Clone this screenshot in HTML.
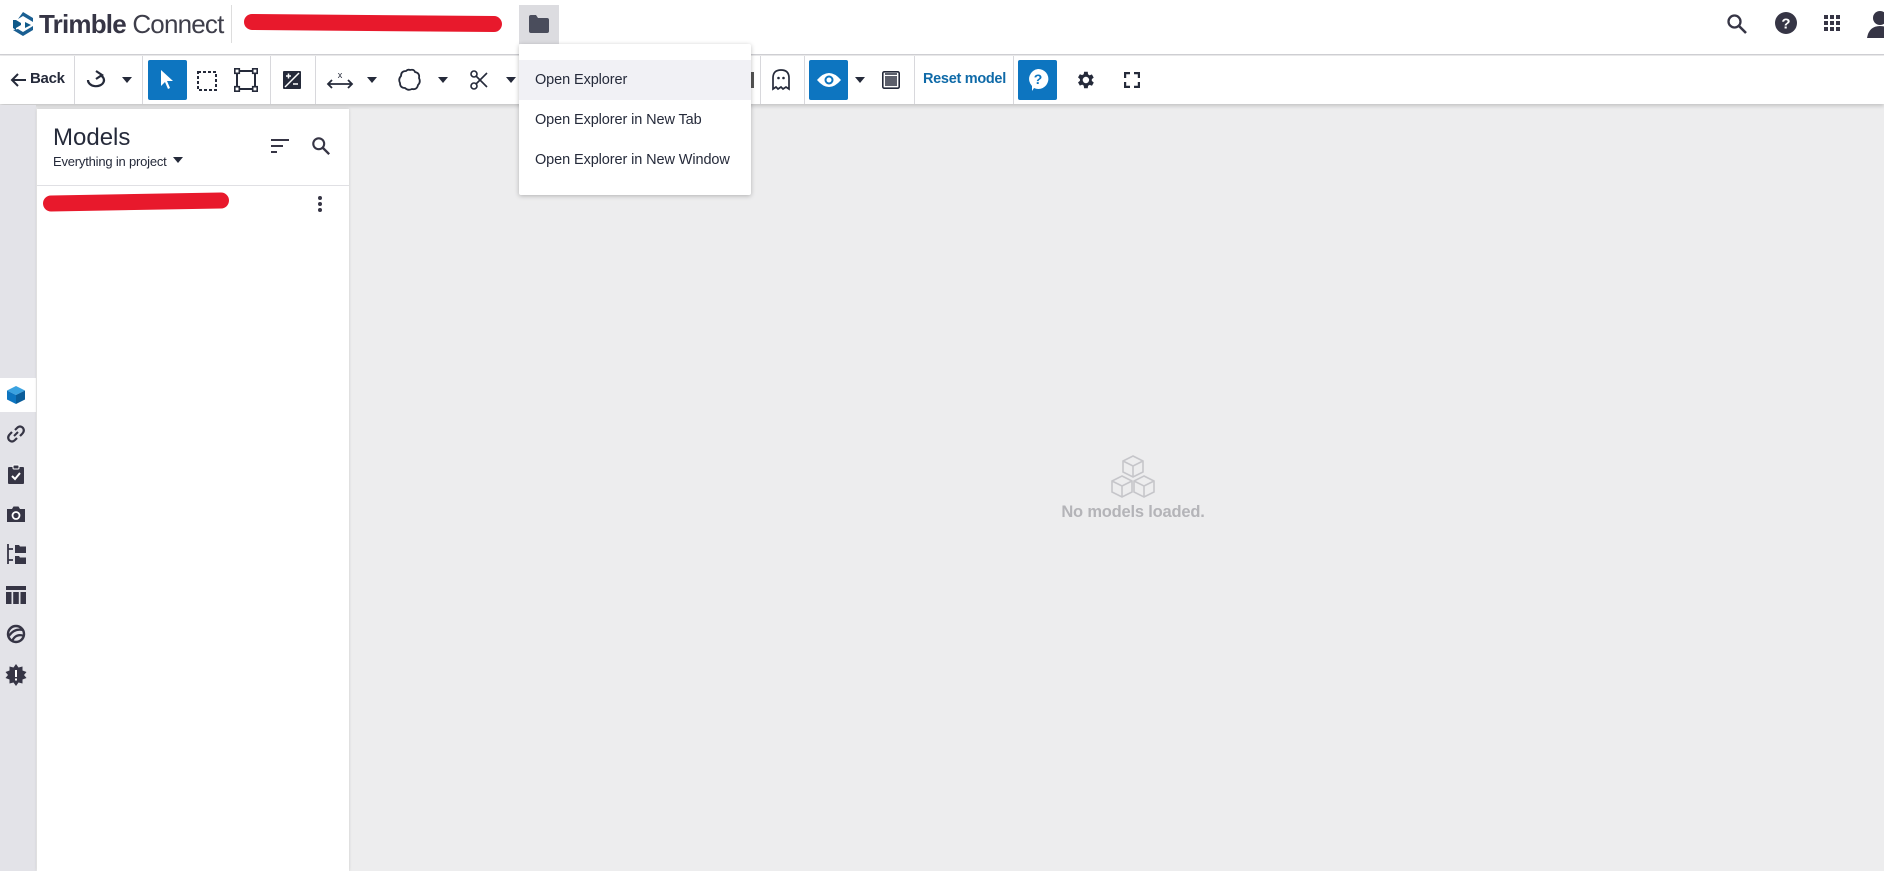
<!DOCTYPE html>
<html><head><meta charset="utf-8"><style>
*{box-sizing:border-box;margin:0;padding:0}
body{width:1884px;height:871px;overflow:hidden;background:#ededee;font-family:"Liberation Sans",sans-serif;color:#252a3a;position:relative}
.a{position:absolute}
svg{display:block}
.sep{position:absolute;top:56px;width:1px;height:48px;background:#d8d8dc}
.item{position:absolute;left:519px;width:232px;height:40px;font-size:14.5px;padding-left:16px;line-height:40px;color:#252a3a;letter-spacing:-0.1px}
</style></head><body>
<!-- header -->
<div class="a" style="left:0;top:0;width:1884px;height:55px;background:#fff;border-bottom:1px solid #cfcfd4"></div>
<svg class="a" style="left:12px;top:11px" width="22" height="26" viewBox="0 0 22 26"><path d="M11 1 L21 7 L21 11 L16 8 L11 5 L6 8 Z" fill="#1a5f92"/><path d="M4 9 L9 12 L9 14 L4 17 L4 19 L1 17 L1 9 Z" fill="#0f5a8a"/><path d="M6 18 L11 21 L16 18 L21 15 L21 19 L11 25 L1 19 Z" fill="#1a5f92"/><path d="M13 11 L19 14 L13 17 Z" fill="#0f5a8a"/></svg>
<div class="a" style="left:39px;top:9px;font-size:26px;color:#363545;letter-spacing:-0.8px;white-space:nowrap"><span style="font-weight:bold">Trimble</span> <span style="color:#3e3e4a">Connect</span></div>
<div class="a" style="left:231px;top:5px;width:1px;height:38px;background:#ddd"></div>
<div class="a" style="left:244px;top:15px;width:258px;height:16px;background:#e8192c;border-radius:9px;transform:rotate(0.5deg)"></div>
<div class="a" style="left:519px;top:5px;width:40px;height:39px;background:#dcdce0"></div>
<svg class="a" style="left:528px;top:14px" width="22" height="20" viewBox="0 0 22 20"><path d="M1 3 Q1 1 3 1 L8 1 L10 4 L19 4 Q21 4 21 6 L21 17 Q21 19 19 19 L3 19 Q1 19 1 17 Z" fill="#4a4d5c"/></svg>
<svg class="a" style="left:1726px;top:13px" width="22" height="22" viewBox="0 0 22 22"><circle cx="8.5" cy="8.5" r="6" fill="none" stroke="#363545" stroke-width="2.3"/><path d="M13 13 L20 20" stroke="#363545" stroke-width="2.6"/></svg>
<svg class="a" style="left:1774px;top:11px" width="24" height="24" viewBox="0 0 24 24"><circle cx="12" cy="12" r="11" fill="#363545"/><text x="12" y="17.5" text-anchor="middle" font-size="15" font-weight="bold" fill="#fff" font-family="Liberation Sans">?</text></svg>
<svg class="a" style="left:1824px;top:15px" width="16" height="16" viewBox="0 0 16 16" fill="#363545"><rect x="0" y="0" width="4" height="4"/><rect x="6" y="0" width="4" height="4"/><rect x="12" y="0" width="4" height="4"/><rect x="0" y="6" width="4" height="4"/><rect x="6" y="6" width="4" height="4"/><rect x="12" y="6" width="4" height="4"/><rect x="0" y="12" width="4" height="4"/><rect x="6" y="12" width="4" height="4"/><rect x="12" y="12" width="4" height="4"/></svg>
<svg class="a" style="left:1867px;top:10px" width="20" height="28" viewBox="0 0 20 28"><circle cx="13" cy="8" r="7" fill="#363545"/><path d="M0 28 Q2 16 13 16 Q20 16 20 20 L20 28 Z" fill="#363545"/></svg>
<!-- toolbar -->
<div class="a" style="left:0;top:56px;width:1884px;height:48px;background:#fff;box-shadow:0 2px 4px rgba(0,0,0,.18)"></div>
<svg class="a" style="left:10px;top:71px" width="18" height="18" viewBox="0 0 18 18"><path d="M16 9 L2 9 M8 3 L2 9 L8 15" fill="none" stroke="#252a3a" stroke-width="2"/></svg>
<div class="a" style="left:30px;top:70px;font-size:15px;font-weight:bold;color:#252a3a;letter-spacing:-0.3px">Back</div>
<div class="sep" style="left:74px"></div>
<svg class="a" style="left:84px;top:69px" width="24" height="22" viewBox="0 0 24 22"><path d="M4 11 A8 6 0 1 0 16 6" fill="none" stroke="#252a3a" stroke-width="2.2"/><path d="M12 2 L18 6 L12 10" fill="none" stroke="#252a3a" stroke-width="2.2"/></svg>
<svg class="a" style="left:122px;top:77px" width="10" height="6"><path d="M0 0 L10 0 L5 6Z" fill="#252a3a"/></svg>
<div class="sep" style="left:142px"></div>
<div class="a" style="left:148px;top:60px;width:39px;height:40px;background:#0d75c0;border-radius:2px"></div>
<svg class="a" style="left:159px;top:69px" width="16" height="22" viewBox="0 0 16 22"><path d="M2 1 L2 17 L6 13 L9 20 L11 19 L8 12 L14 12 Z" fill="#fff"/></svg>
<svg class="a" style="left:197px;top:71px" width="20" height="20" viewBox="0 0 20 20"><rect x="1" y="1" width="18" height="18" fill="none" stroke="#252a3a" stroke-width="2" stroke-dasharray="3 2"/></svg>
<svg class="a" style="left:234px;top:68px" width="24" height="24" viewBox="0 0 24 24"><rect x="3" y="3" width="18" height="18" fill="none" stroke="#252a3a" stroke-width="2"/><g fill="#fff" stroke="#252a3a" stroke-width="1.6"><rect x="0.8" y="0.8" width="4.5" height="4.5"/><rect x="18.7" y="0.8" width="4.5" height="4.5"/><rect x="0.8" y="18.7" width="4.5" height="4.5"/><rect x="18.7" y="18.7" width="4.5" height="4.5"/></g></svg>
<div class="sep" style="left:270px"></div>
<svg class="a" style="left:282px;top:70px" width="20" height="20" viewBox="0 0 20 20"><rect x="1" y="1" width="18" height="18" rx="1" fill="#252a3a"/><path d="M17 3 L3 17" stroke="#fff" stroke-width="1.5"/><path d="M4 6 H9 M6.5 3.5 V8.5" stroke="#fff" stroke-width="1.5"/><path d="M11 14 H16" stroke="#fff" stroke-width="1.5"/></svg>
<div class="sep" style="left:315px"></div>
<svg class="a" style="left:326px;top:69px" width="28" height="22" viewBox="0 0 28 22"><text x="14" y="9" text-anchor="middle" font-size="9" fill="#252a3a" font-family="Liberation Sans">x</text><path d="M2 15 H26 M6 11 L2 15 L6 19 M22 11 L26 15 L22 19" fill="none" stroke="#252a3a" stroke-width="1.8"/></svg>
<svg class="a" style="left:367px;top:77px" width="10" height="6"><path d="M0 0 L10 0 L5 6Z" fill="#252a3a"/></svg>
<svg class="a" style="left:398px;top:68px" width="24" height="24" viewBox="0 0 24 24"><path d="M12 2 Q16 1 17 4 Q22 5 21 10 Q23 14 20 17 Q19 22 14 21 Q10 23 7 20 Q2 20 2 15 Q0 11 3 8 Q3 3 8 3 Q10 1 12 2Z" fill="none" stroke="#252a3a" stroke-width="1.8"/></svg>
<svg class="a" style="left:438px;top:77px" width="10" height="6"><path d="M0 0 L10 0 L5 6Z" fill="#252a3a"/></svg>
<svg class="a" style="left:470px;top:70px" width="18" height="20" viewBox="0 0 18 20"><circle cx="4" cy="4" r="3" fill="none" stroke="#252a3a" stroke-width="1.6"/><circle cx="4" cy="16" r="3" fill="none" stroke="#252a3a" stroke-width="1.6"/><path d="M6 6 L17 17 M6 14 L17 3" stroke="#252a3a" stroke-width="1.6"/></svg>
<svg class="a" style="left:506px;top:77px" width="10" height="6"><path d="M0 0 L10 0 L5 6Z" fill="#252a3a"/></svg>
<div class="a" style="left:751px;top:72px;width:3px;height:16px;background:#555"></div>
<div class="sep" style="left:760px"></div>
<svg class="a" style="left:770px;top:68px" width="22" height="24" viewBox="0 0 22 24"><path d="M3 21 L3 10 Q3 2 11 2 Q19 2 19 10 L19 21 L16 19 L13 21 L11 19 L8 21 L6 19 Z" fill="none" stroke="#252a3a" stroke-width="1.7"/><circle cx="8.5" cy="10" r="1.3" fill="#252a3a"/><circle cx="13.5" cy="10" r="1.3" fill="#252a3a"/></svg>
<div class="sep" style="left:804px"></div>
<div class="a" style="left:809px;top:60px;width:39px;height:40px;background:#0d75c0;border-radius:2px"></div>
<svg class="a" style="left:816px;top:72px" width="26" height="16" viewBox="0 0 26 16"><path d="M1 8 Q13 -6 25 8 Q13 22 1 8Z" fill="#fff"/><circle cx="13" cy="8" r="4.5" fill="#0d75c0"/><circle cx="13" cy="8" r="2.5" fill="#fff"/></svg>
<svg class="a" style="left:855px;top:77px" width="10" height="6"><path d="M0 0 L10 0 L5 6Z" fill="#252a3a"/></svg>
<svg class="a" style="left:882px;top:71px" width="18" height="18" viewBox="0 0 18 18"><rect x="0.8" y="0.8" width="16.4" height="16.4" rx="1.5" fill="#fff" stroke="#252a3a" stroke-width="1.6"/><rect x="3" y="5" width="12" height="10" fill="#252a3a" opacity=".75"/><path d="M3 3 H15" stroke="#252a3a" stroke-width="1.5"/></svg>
<div class="sep" style="left:914px"></div>
<div class="a" style="left:923px;top:71px;font-size:14.5px;font-weight:bold;color:#0f6aa8;letter-spacing:-0.3px">Reset model</div>
<div class="sep" style="left:1013px"></div>
<div class="a" style="left:1018px;top:60px;width:39px;height:40px;background:#0d75c0;border-radius:2px"></div>
<svg class="a" style="left:1027px;top:68px" width="22" height="24" viewBox="0 0 22 24"><path d="M11 1 A10 10 0 1 1 7 20 L5 23 L5 18 A10 10 0 0 1 11 1Z" fill="#fff"/><text x="11" y="16" text-anchor="middle" font-size="14" font-weight="bold" fill="#0d75c0" font-family="Liberation Sans">?</text></svg>
<svg class="a" style="left:1074px;top:69px" width="22" height="22" viewBox="0 0 24 24"><path fill="#252a3a" d="M19.4 13a7.5 7.5 0 0 0 0-2l2.1-1.6-2-3.5-2.5 1a7.6 7.6 0 0 0-1.7-1L15 3h-4l-.4 2.7a7.6 7.6 0 0 0-1.7 1l-2.5-1-2 3.5L6.5 11a7.5 7.5 0 0 0 0 2l-2.1 1.6 2 3.5 2.5-1a7.6 7.6 0 0 0 1.7 1L11 21h4l.4-2.7a7.6 7.6 0 0 0 1.7-1l2.5 1 2-3.5zM13 15.5a3.5 3.5 0 1 1 0-7 3.5 3.5 0 0 1 0 7z"/></svg>
<svg class="a" style="left:1124px;top:72px" width="16" height="16" viewBox="0 0 16 16"><path d="M1 6 V1 H6 M10 1 H15 V6 M15 10 V15 H10 M6 15 H1 V10" fill="none" stroke="#252a3a" stroke-width="2.4"/></svg>
<!-- dropdown -->
<div class="a" style="left:519px;top:44px;width:232px;height:151px;background:#fff;box-shadow:0 1px 5px rgba(0,0,0,.25);border-radius:2px"></div>
<div class="item" style="top:60px;background:#f1f1f5">Open Explorer</div>
<div class="item" style="top:100px">Open Explorer in New Tab</div>
<div class="item" style="top:140px">Open Explorer in New Window</div>
<!-- left strip -->
<div class="a" style="left:0;top:105px;width:36px;height:766px;background:#e3e3e8"></div>
<div class="a" style="left:0;top:378px;width:36px;height:34px;background:#fff"></div>
<svg class="a" style="left:6px;top:385px" width="20" height="20" viewBox="0 0 20 20"><path d="M10 1 L19 5.5 L10 10 L1 5.5Z" fill="#3aa2e0"/><path d="M1 5.5 L10 10 L10 19 L1 14.5Z" fill="#0d75c0"/><path d="M19 5.5 L10 10 L10 19 L19 14.5Z" fill="#0a5d9a"/></svg>
<svg class="a" style="left:6px;top:424px" width="20" height="20" viewBox="0 0 20 20"><path d="M8 12 L12 8" stroke="#363545" stroke-width="2"/><path d="M9 6 L11 4 Q14 1 17 4 Q19 7 16 10 L14 12 M11 14 L9 16 Q6 19 3 16 Q1 13 4 10 L6 8" fill="none" stroke="#363545" stroke-width="2.2"/></svg>
<svg class="a" style="left:7px;top:464px" width="18" height="21" viewBox="0 0 18 21"><rect x="1" y="3" width="16" height="17" rx="1" fill="#363545"/><rect x="6" y="1" width="6" height="4" rx="1" fill="#363545" stroke="#fff" stroke-width="1"/><path d="M5 12 L8 15 L13 9" fill="none" stroke="#fff" stroke-width="2"/></svg>
<svg class="a" style="left:6px;top:505px" width="20" height="18" viewBox="0 0 20 18"><path d="M1 4 H6 L7.5 1.5 H12.5 L14 4 H19 V17 H1Z" fill="#363545"/><circle cx="10" cy="10.5" r="3.5" fill="none" stroke="#fff" stroke-width="1.8"/></svg>
<svg class="a" style="left:6px;top:543px" width="21" height="22" viewBox="0 0 21 22"><path d="M2 1 V21 M2 6 H7 M2 17 H7" stroke="#363545" stroke-width="1.8"/><path d="M9 2 H13 L14 3.5 H20 V10 H9Z M9 13 H13 L14 14.5 H20 V21 H9Z" fill="#363545"/></svg>
<svg class="a" style="left:6px;top:586px" width="20" height="18" viewBox="0 0 20 18" fill="#363545"><rect x="0" y="0" width="20" height="4"/><rect x="0" y="6" width="5.5" height="12"/><rect x="7.2" y="6" width="5.6" height="12"/><rect x="14.5" y="6" width="5.5" height="12"/></svg>
<svg class="a" style="left:6px;top:624px" width="20" height="20" viewBox="0 0 20 20"><circle cx="10" cy="10" r="8" fill="none" stroke="#363545" stroke-width="2.4"/><path d="M3 12 Q8 4 17 6 M6 17 Q10 9 18 12" fill="none" stroke="#363545" stroke-width="2.2"/></svg>
<svg class="a" style="left:5px;top:664px" width="22" height="22" viewBox="0 0 22 22"><path d="M11 0 L13.5 3.5 L17.5 2.5 L17.5 6.5 L21.5 8 L19 11 L21.5 14 L17.5 15.5 L17.5 19.5 L13.5 18.5 L11 22 L8.5 18.5 L4.5 19.5 L4.5 15.5 L0.5 14 L3 11 L0.5 8 L4.5 6.5 L4.5 2.5 L8.5 3.5Z" fill="#363545"/><rect x="10" y="6" width="2" height="7" fill="#fff"/><rect x="10" y="14.5" width="2" height="2" fill="#fff"/></svg>
<!-- models panel -->
<div class="a" style="left:37px;top:109px;width:312px;height:762px;background:#fff;box-shadow:0 0 3px rgba(0,0,0,.15)"></div>
<div class="a" style="left:53px;top:124px;font-size:24px;color:#252a3a">Models</div>
<div class="a" style="left:53px;top:154px;font-size:13px;color:#252a3a;letter-spacing:-0.2px">Everything in project</div>
<svg class="a" style="left:173px;top:157px" width="10" height="6"><path d="M0 0 L10 0 L5 6Z" fill="#252a3a"/></svg>
<svg class="a" style="left:270px;top:138px" width="20" height="16" viewBox="0 0 20 16"><path d="M1 2 H19 M1 8 H13 M1 14 H7" stroke="#363545" stroke-width="2"/></svg>
<svg class="a" style="left:311px;top:136px" width="20" height="20" viewBox="0 0 22 22"><circle cx="8.5" cy="8.5" r="6" fill="none" stroke="#363545" stroke-width="2.3"/><path d="M13 13 L20 20" stroke="#363545" stroke-width="2.6"/></svg>
<div class="a" style="left:37px;top:185px;width:312px;height:1px;background:#e0e0e4"></div>
<div class="a" style="left:43px;top:194px;width:186px;height:16px;background:#e8192c;border-radius:9px;transform:rotate(-1deg)"></div>
<svg class="a" style="left:317px;top:195px" width="6" height="18" viewBox="0 0 6 18" fill="#363545"><circle cx="3" cy="3" r="2"/><circle cx="3" cy="9" r="2"/><circle cx="3" cy="15" r="2"/></svg>
<!-- empty state -->
<svg class="a" style="left:1110px;top:455px" width="46" height="43" viewBox="0 0 46 43"><g fill="none" stroke="#c6c6ca" stroke-width="1.6"><path d="M23 1 L33 6 L33 17 L23 22 L13 17 L13 6Z M13 6 L23 11 L33 6 M23 11 V22"/><path d="M12 21 L22 26 L22 37 L12 42 L2 37 L2 26Z M2 26 L12 31 L22 26 M12 31 V42"/><path d="M34 21 L44 26 L44 37 L34 42 L24 37 L24 26Z M24 26 L34 31 L44 26 M34 31 V42"/></g></svg>
<div class="a" style="left:1033px;top:503px;width:200px;text-align:center;font-size:16.5px;font-weight:bold;color:#b4b4b8;letter-spacing:-0.2px">No models loaded.</div>
</body></html>
